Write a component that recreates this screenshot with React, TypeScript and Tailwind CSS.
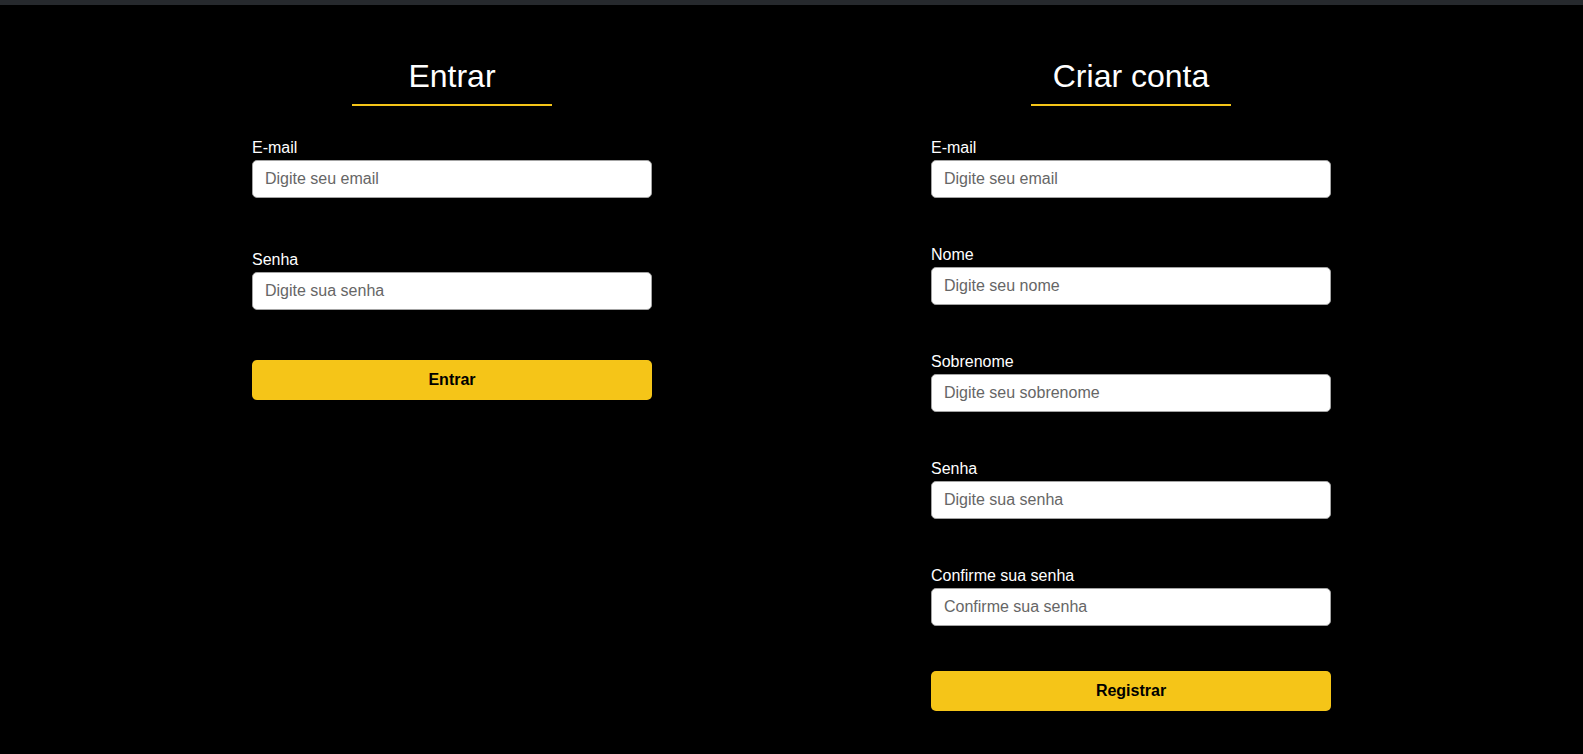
const loginFields = [
  { label: 'E-mail', placeholder: 'Digite seu email', type: 'email' },
  { label: 'Senha', placeholder: 'Digite sua senha', type: 'password' },
];

const registerFields = [
  { label: 'E-mail', placeholder: 'Digite seu email', type: 'email' },
  { label: 'Nome', placeholder: 'Digite seu nome', type: 'text' },
  { label: 'Sobrenome', placeholder: 'Digite seu sobrenome', type: 'text' },
  { label: 'Senha', placeholder: 'Digite sua senha', type: 'password' },
  { label: 'Confirme sua senha', placeholder: 'Confirme sua senha', type: 'password' },
];

function Field({ label, placeholder, type }: { label: string; placeholder: string; type: string }) {
  return (
    <div className="flex flex-col">
      <label className="mb-[3px] text-base leading-[18px] text-white">{label}</label>
      <input
        type={type}
        placeholder={placeholder}
        className="h-[38px] w-full rounded-[5px] border border-[#a3a3a3] bg-white px-3 text-base text-black placeholder:text-[#666666] outline-none"
      />
    </div>
  );
}

function Title({ children }: { children: string }) {
  return (
    <div className="flex flex-col items-center">
      <h2 className="text-[32px] leading-[37px] text-white">{children}</h2>
      <div className="mt-[9px] h-[2px] w-[200px] bg-[#f5c518]" />
    </div>
  );
}

export default function App() {
  return (
    <div className="min-h-screen bg-black font-['Liberation_Sans',Arial,sans-serif]">
      <div className="h-[5px] bg-[#26292d]" />

      <main className="flex justify-center gap-[279px] pt-[53px]">
        {/* Entrar */}
        <section className="w-[400px]">
          <Title>Entrar</Title>
          <form className="mt-[33px] flex flex-col gap-[53px]">
            {loginFields.map((f) => (
              <Field key={f.label} {...f} />
            ))}
          </form>
          <button className="mt-[50px] h-[40px] w-full rounded-[5px] bg-[#f5c518] text-base font-bold text-black">
            Entrar
          </button>
        </section>

        {/* Criar conta */}
        <section className="w-[400px]">
          <Title>Criar conta</Title>
          <form className="mt-[33px] flex flex-col gap-[48px]">
            {registerFields.map((f) => (
              <Field key={f.label} {...f} />
            ))}
          </form>
          <button className="mt-[45px] h-[40px] w-full rounded-[5px] bg-[#f5c518] text-base font-bold text-black">
            Registrar
          </button>
        </section>
      </main>
    </div>
  );
}
